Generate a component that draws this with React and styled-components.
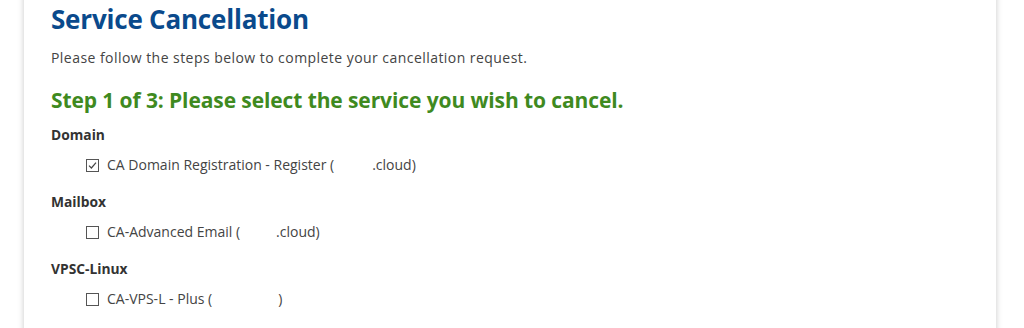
import styled, { createGlobalStyle } from "styled-components";

const GlobalStyle = createGlobalStyle`
  html, body {
    margin: 0;
    padding: 0;
    background: #ffffff;
    font-family: "Open Sans", "Noto Sans", sans-serif;
  }
`;

const Page = styled.div`
  height: 328px;
  overflow: hidden;
  padding: 0 28px 0 24px;
`;

const Card = styled.div`
  background: #fff;
  min-height: 360px;
  margin-top: -20px;
  padding: 23px 27px;
  box-shadow: 0 0 6px rgba(0, 0, 0, 0.22);
`;

const Title = styled.h1`
  margin: 0;
  font-size: 26px;
  line-height: 32px;
  font-weight: 700;
  color: #0a4a8c;
  letter-spacing: -0.2px;
`;

const Intro = styled.p`
  margin: 14px 0 0;
  font-size: 14px;
  line-height: 18px;
  letter-spacing: 0.45px;
  color: #444;
`;

const StepTitle = styled.h2`
  margin: 19px 0 0;
  font-size: 21px;
  line-height: 28px;
  font-weight: 700;
  letter-spacing: -0.1px;
  color: #3f8a1f;
`;

const Group = styled.div`
  margin-top: ${(p) => (p.$first ? "12px" : "18px")};
`;

const GroupLabel = styled.div`
  font-size: 13.8px;
  line-height: 18px;
  font-weight: 700;
  color: #333;
`;

const Item = styled.label`
  display: flex;
  align-items: center;
  gap: 8px;
  margin: 11px 0 0 35px;
  font-size: 14px;
  line-height: 20px;
  color: #444;
`;

const Box = styled.span`
  width: 11px;
  height: 11px;
  border: 1px solid #555;
  display: inline-flex;
  align-items: center;
  justify-content: center;
  background: #fff;
`;

const Hidden = styled.span`
  display: inline-block;
  width: ${(p) => p.$w}px;
`;

const Check = () => (
  <svg width="9" height="9" viewBox="0 0 9 9">
    <path d="M1 4.6 L3.4 7 L8 1.6" fill="none" stroke="#444" strokeWidth="1.2" />
  </svg>
);

const groups = [
  { label: "Domain", name: "CA Domain Registration - Register (", gap: 38, tail: ".cloud)", checked: true },
  { label: "Mailbox", name: "CA-Advanced Email (", gap: 36, tail: ".cloud)" },
  { label: "VPSC-Linux", name: "CA-VPS-L - Plus (", gap: 66, tail: ")" },
];

export default function App() {
  return (
    <>
      <GlobalStyle />
      <Page>
        <Card>
          <Title>Service Cancellation</Title>
          <Intro>Please follow the steps below to complete your cancellation request.</Intro>
          <StepTitle>Step 1 of 3: Please select the service you wish to cancel.</StepTitle>
          {groups.map((g, i) => (
            <Group key={g.label} $first={i === 0}>
              <GroupLabel>{g.label}</GroupLabel>
              <Item>
                <Box>{g.checked && <Check />}</Box>
                <span>
                  {g.name}
                  <Hidden $w={g.gap} />
                  {g.tail}
                </span>
              </Item>
            </Group>
          ))}
        </Card>
      </Page>
    </>
  );
}
